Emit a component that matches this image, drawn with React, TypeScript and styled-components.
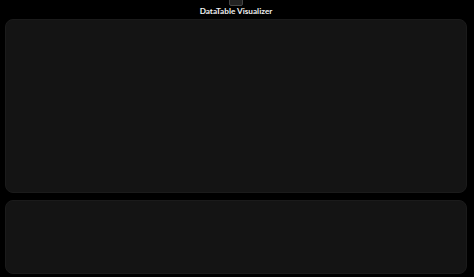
import styled, { createGlobalStyle } from "styled-components";

const Global = createGlobalStyle`
  html, body {
    margin: 0;
    background: #000;
    height: 100%;
  }
  #root {
    height: 100%;
  }
`;

const Page = styled.div`
  position: relative;
  display: flex;
  flex-direction: column;
  height: 277px;
  padding: 0 7px 3px 5px;
  box-sizing: border-box;
  background: #000;
  font-family: Lato, "Liberation Sans", sans-serif;
`;

const Handle = styled.div`
  position: absolute;
  top: -2px;
  left: 229px;
  width: 12px;
  height: 6px;
  border: 1px solid #444;
  border-radius: 2px;
  background: #222;
`;

const Title = styled.h1`
  margin: 0;
  height: 19px;
  display: flex;
  align-items: center;
  justify-content: center;
  padding-top: 2px;
  box-sizing: border-box;
  color: #f0f0f0;
  font-size: 8.2px;
  font-weight: 700;
  letter-spacing: 0;
`;

const Panel = styled.section<{ $h: number }>`
  height: ${(p) => p.$h}px;
  flex-shrink: 0;
  background: #141414;
  border: 1px solid #1b1b1b;
  border-radius: 8px;
  box-sizing: border-box;
`;

const Panels = styled.div`
  display: flex;
  flex-direction: column;
  gap: 7px;
`;

export default function App() {
  return (
    <>
      <Global />
      <Page>
        <Handle />
        <Title>DataTable Visualizer</Title>
        <Panels>
          <Panel $h={174} />
          <Panel $h={74} />
        </Panels>
      </Page>
    </>
  );
}
